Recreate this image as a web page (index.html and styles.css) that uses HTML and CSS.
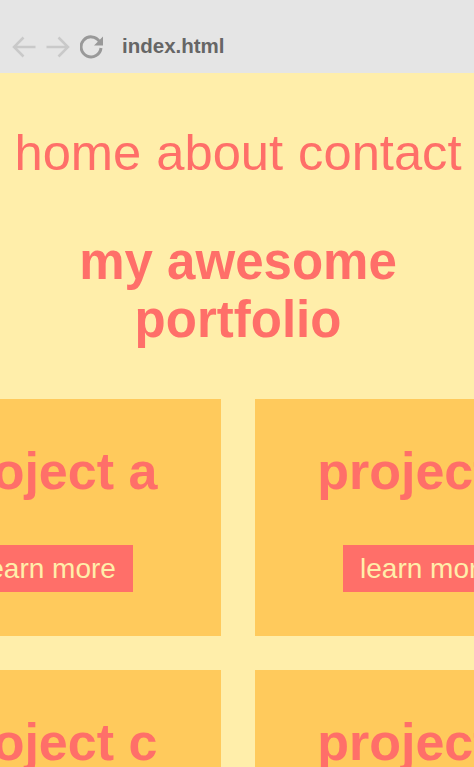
FILE: index.html
```html
<!DOCTYPE html>
<html lang="en">
<head>
    <meta charset="UTF-8">
    <meta name="viewport" content="width=device-width, initial-scale=1.0">
    <title>index.html</title>
    <link rel="stylesheet" href="styles.css">
</head>
<body>
    <div class="toolbar">
        <svg class="icon" viewBox="0 0 24 24" width="24" height="24"><path d="M23.500 12H2M11.500 2.500L2 12l9.500 9.500" class="arrow"/></svg>
        <svg class="icon" viewBox="0 0 24 24" width="24" height="24"><path d="M.5 12H22M12.500 2.500L22 12l-9.500 9.500" class="arrow"/></svg>
        <svg class="icon" viewBox="0 0 24 24" width="24" height="24"><path d="M19.500 6.500A10 10 0 1 0 21 13" class="spin"/><path d="M23 1.500V10.500H14z" class="tip"/></svg>
        <span class="filename">index.html</span>
    </div>

    <nav class="nav">
        <a href="#">home</a>
        <a href="#">about</a>
        <a href="#">contact</a>
    </nav>

    <h1 class="title">my awesome portfolio</h1>

    <div class="projects">
        <div class="project">
            <h2>project a</h2>
            <a class="more" href="#">learn more</a>
        </div>
        <div class="project">
            <h2>project b</h2>
            <a class="more" href="#">learn more</a>
        </div>
        <div class="project">
            <h2>project c</h2>
            <a class="more" href="#">learn more</a>
        </div>
        <div class="project">
            <h2>project d</h2>
            <a class="more" href="#">learn more</a>
        </div>
    </div>
</body>
</html>
```

FILE: styles.css
```css
html, body {
    height: 100%;
    overflow: hidden;
}
body {
    margin: 0;
    width: 476px;
    font-family: "Liberation Sans", Arial, sans-serif;
    text-align: center;
    background: #ffeeaa;
    color: #ff6f69;
}
a {
    color: inherit;
    text-decoration: none;
}
.toolbar {
    height: 73px;
    box-sizing: border-box;
    padding: 20px 0 0 12px;
    background: #e5e5e5;
    display: flex;
    align-items: center;
    gap: 10px;
}
.icon {
    flex: none;
}
.arrow {
    fill: none;
    stroke: #c9c9c9;
    stroke-width: 2.500;
}
.spin {
    fill: none;
    stroke: #999;
    stroke-width: 3;
}
.tip {
    fill: #999;
}
.filename {
    margin-left: 8px;
    padding-bottom: 2px;
    font-size: 20.500px;
    font-weight: bold;
    color: #666;
}
.nav {
    display: flex;
    justify-content: center;
    gap: 15px;
    padding-top: 51px;
    font-size: 50.700px;
    line-height: 58px;
}
.title {
    margin: 51px auto 0;
    width: 360px;
    font-size: 51px;
    line-height: 58px;
}
.projects {
    display: grid;
    grid-template-columns: 344px 344px;
    justify-content: center;
    gap: 34px;
    margin-top: 50px;
}
.project {
    height: 237px;
    background: #ffca5c;
    box-sizing: border-box;
    padding-top: 43px;
}
.project h2 {
    margin: 0;
    font-size: 52px;
    line-height: 58px;
}
.more {
    display: inline-block;
    margin-top: 45px;
    padding: 0 17px;
    background: #ff6f69;
    color: #ffeeaa;
    font-size: 28px;
    line-height: 47px;
}
```
